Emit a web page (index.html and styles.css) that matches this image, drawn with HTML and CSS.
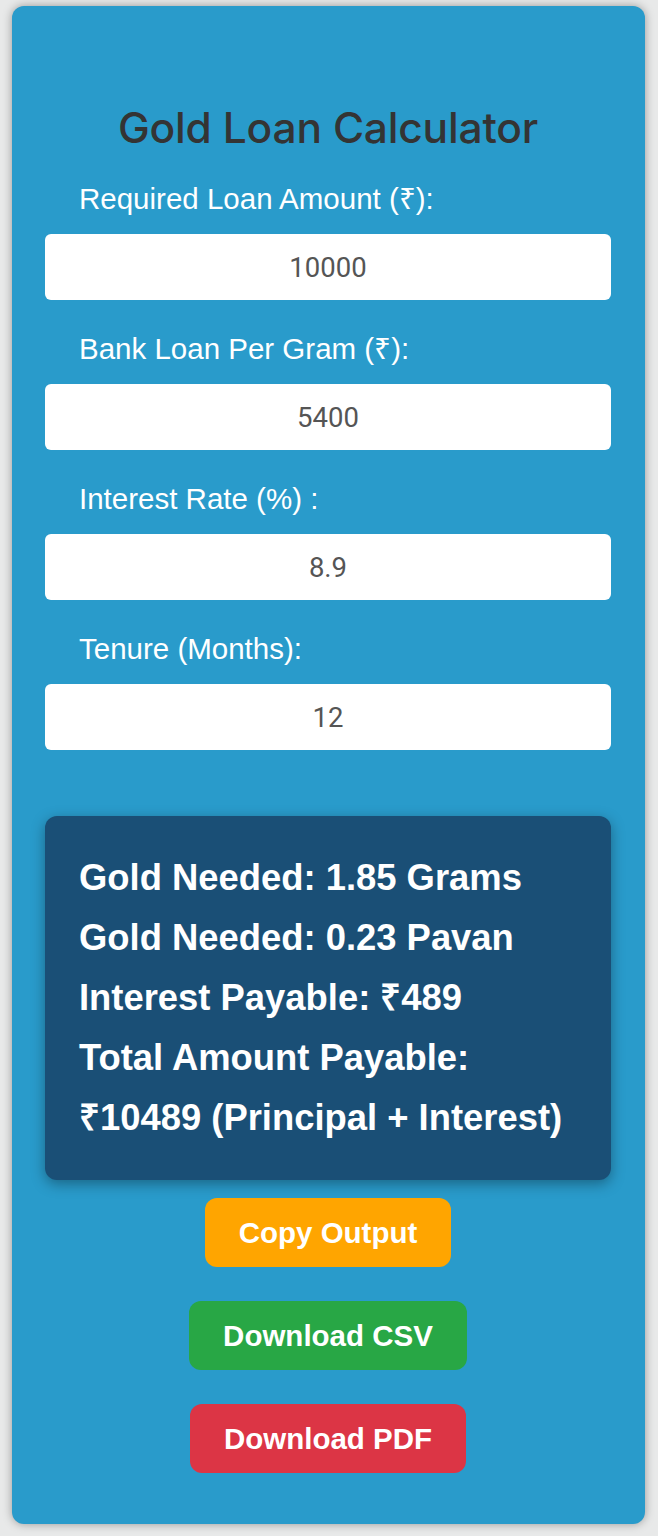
FILE: index.html
```html
<!DOCTYPE html>
<html lang="en">
<head>
<meta charset="utf-8">
<title>Gold Loan Calculator</title>
<link rel="stylesheet" href="styles.css">
</head>
<body>
<div class="card">
  <h2 class="title">Gold Loan Calculator</h2>
  <div class="fields">
    <div class="field">
      <label class="label" for="amt">Required Loan Amount (₹):</label>
      <input class="input" id="amt" type="text" value="10000">
    </div>
    <div class="field">
      <label class="label" for="pergram">Bank Loan Per Gram (₹):</label>
      <input class="input" id="pergram" type="text" value="5400">
    </div>
    <div class="field">
      <label class="label" for="rate">Interest Rate (%) :</label>
      <input class="input" id="rate" type="text" value="8.9">
    </div>
    <div class="field">
      <label class="label" for="tenure">Tenure (Months):</label>
      <input class="input" id="tenure" type="text" value="12">
    </div>
  </div>
  <div class="result">
    <p class="line">Gold Needed: 1.85 Grams</p>
    <p class="line">Gold Needed: 0.23 Pavan</p>
    <p class="line">Interest Payable: ₹489</p>
    <p class="line">Total Amount Payable:</p>
    <p class="line">₹10489 (Principal + Interest)</p>
  </div>
  <div class="actions">
    <button class="btn btn-copy" type="button">Copy Output</button>
    <button class="btn btn-csv" type="button">Download CSV</button>
    <button class="btn btn-pdf" type="button">Download PDF</button>
  </div>
</div>
</body>
</html>
```
FILE: styles.css
```css
* { box-sizing: border-box; }
html, body { margin: 0; padding: 0; }
body {
  background: #e8e9e9;
  font-family: "Liberation Sans", Arial, sans-serif;
  padding: 6px 0 12px 12px;
}
.card {
  width: 633px;
  background: #299bcb;
  border-radius: 12px;
  box-shadow: 0 0 10px rgba(0, 0, 0, 0.35);
  padding: 97px 34px 51px 33px;
}
.title {
  margin: 0;
  font-family: Inter, "Noto Sans", sans-serif;
  font-weight: 500;
  font-size: 42.5px;
  line-height: 50px;
  color: #343434;
  text-align: center;
  letter-spacing: -0.2px;
}
.fields {
  margin-top: 31px;
  display: flex;
  flex-direction: column;
  gap: 34px;
}
.field {
  display: flex;
  flex-direction: column;
  gap: 20px;
}
.label {
  display: block;
  padding-left: 34px;
  font-size: 29.5px;
  line-height: 30px;
  color: #ffffff;
}
.input {
  display: block;
  width: 566px;
  height: 66px;
  border: none;
  border-radius: 6px;
  background: #ffffff;
  text-align: center;
  font-family: Roboto, "Liberation Sans", sans-serif;
  font-size: 27.5px;
  color: #555555;
  padding: 0;
  outline: none;
}
.result {
  margin-top: 66px;
  width: 566px;
  background: #1a4f76;
  border-radius: 12px;
  padding: 32px 18px 32px 34px;
  box-shadow: 0 4px 14px rgba(0, 0, 0, 0.35);
}
.line {
  margin: 0;
  color: #ffffff;
  font-weight: 700;
  font-size: 36.4px;
  line-height: 60px;
  white-space: nowrap;
}
.actions {
  margin-top: 18px;
  display: flex;
  flex-direction: column;
  align-items: center;
  gap: 34px;
}
.btn {
  border: none;
  border-radius: 12px;
  color: #ffffff;
  font-family: "Liberation Sans", Arial, sans-serif;
  font-weight: 700;
  font-size: 29.5px;
  line-height: 35px;
  padding: 17px 34px;
  cursor: pointer;
}
.btn-copy { background: #ffa500; }
.btn-csv { background: #28a745; }
.btn-pdf { background: #dc3545; }
```
